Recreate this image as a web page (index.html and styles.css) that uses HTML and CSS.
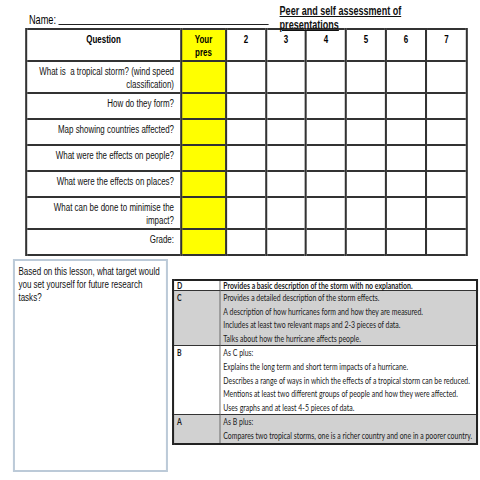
FILE: index.html
```html
<!DOCTYPE html>
<html>
<head>
<meta charset="utf-8">
<link rel="stylesheet" href="styles.css">
</head>
<body>
<div class="viewport">
<div class="page">
  <header class="top">
    <div class="name">Name:<span class="name-line"></span></div>
    <h1 class="title">Peer and self assessment of<br>presentations</h1>
  </header>
  <table class="grid">
    <colgroup>
      <col class="c-q"><col class="c-y"><col class="c-n"><col class="c-n"><col class="c-n"><col class="c-n"><col class="c-n"><col class="c-l">
    </colgroup>
    <tr class="h32"><th>Question</th><th class="yours">Your<br>pres</th><th>2</th><th>3</th><th>4</th><th>5</th><th>6</th><th>7</th></tr>
    <tr class="h32"><td class="q">What is&nbsp; a tropical storm? (wind speed<br>classification)</td><td class="yours"></td><td></td><td></td><td></td><td></td><td></td><td></td></tr>
    <tr class="h26"><td class="q">How do they form?</td><td class="yours"></td><td></td><td></td><td></td><td></td><td></td><td></td></tr>
    <tr class="h26"><td class="q">Map showing countries affected?</td><td class="yours"></td><td></td><td></td><td></td><td></td><td></td><td></td></tr>
    <tr class="h26"><td class="q">What were the effects on people?</td><td class="yours"></td><td></td><td></td><td></td><td></td><td></td><td></td></tr>
    <tr class="h26"><td class="q">What were the effects on places?</td><td class="yours"></td><td></td><td></td><td></td><td></td><td></td><td></td></tr>
    <tr class="h32"><td class="q">What can be done to minimise the<br>impact?</td><td class="yours"></td><td></td><td></td><td></td><td></td><td></td><td></td></tr>
    <tr class="h26"><td class="q">Grade:</td><td class="yours"></td><td></td><td></td><td></td><td></td><td></td><td></td></tr>
  </table>
  <div class="lower">
    <div class="target-box">Based on this lesson, what target would<br>you set yourself for future research<br>tasks?</div>
    <table class="rubric">
      <colgroup><col class="r-g"><col class="r-t"></colgroup>
      <tr class="rb-head"><td class="g">D</td><td>Provides a basic description of the storm with no explanation.</td></tr>
      <tr class="shaded"><td class="g">C</td><td>Provides a detailed description of the storm effects.<br>A description of how hurricanes form and how they are measured.<br>Includes at least two relevant maps and 2-3 pieces of data.<br>Talks about how the hurricane affects people.</td></tr>
      <tr><td class="g">B</td><td>As C plus:<br>Explains the long term and short term impacts of a hurricane.<br>Describes a range of ways in which the effects of a tropical storm can be reduced.<br>Mentions at least two different groups of people and how they were affected.<br>Uses graphs and at least 4-5 pieces of data.</td></tr>
      <tr class="shaded"><td class="g">A</td><td>As B plus:<br>Compares two tropical storms, one is a richer country and one in a poorer country.</td></tr>
    </table>
  </div>
</div>
</div>
</body>
</html>
```
FILE: styles.css
```css
* { box-sizing: border-box; }
html, body { margin: 0; background: #fff; overflow: hidden; }
body {
  color: #000;
  font-family: "Liberation Sans", Arial, sans-serif;
}
.viewport { width: 480px; height: 480px; overflow: hidden; }
/* the source sheet is horizontally squeezed; lay out at full width and squeeze it */
.page {
  width: 706px;
  height: 480px;
  transform: scaleX(0.68);
  transform-origin: 0 0;
}

.top {
  display: flex;
  align-items: flex-start;
  height: 28px;
  padding-left: 42.6px;
}
.name {
  display: flex;
  align-items: flex-start;
  padding-top: 13px;
  font-size: 13.5px;
  line-height: 14px;
}
.name-line {
  display: block;
  width: 308.8px;
  height: 12px;
  margin-left: 4px;
  border-bottom: 1px solid #222;
}
.title {
  position: relative;
  z-index: 1;
  margin: 0 0 0 16px;
  padding-top: 4px;
  font-size: 13.3px;
  line-height: 13.5px;
  font-weight: bold;
  text-decoration: underline;
  white-space: nowrap;
  color: #111;
}

.grid {
  margin-left: 36.8px;
  width: 648.5px;
  border-collapse: collapse;
  table-layout: fixed;
}
.c-q { width: 227.9px; }
.c-y { width: 66.2px; }
.c-n { width: 58.8px; }
.c-l { width: 60.3px; }
.h32 { height: 32px; }
.h26 { height: 26px; }
.grid th, .grid td {
  border-style: solid;
  border-color: #333;
  border-width: 2px 3px;
  padding: 0;
  vertical-align: top;
}
.grid th {
  padding-top: 2px;
  font-size: 11.7px;
  line-height: 13px;
  font-weight: bold;
  text-align: center;
}
.grid td.q {
  padding: 2px 8.8px 0 4px;
  text-align: right;
  font-size: 11.7px;
  line-height: 13px;
  color: #111;
  white-space: nowrap;
}
.yours { background: #ffff00; }

.lower {
  display: flex;
  align-items: flex-start;
  margin-top: 3px;
}
.target-box {
  margin-left: 19.1px;
  width: 227.9px;
  height: 213px;
  border-style: solid;
  border-color: #bccad8;
  border-width: 2px 3px;
  padding: 4px 5px;
  font-size: 11.8px;
  line-height: 13px;
  color: #111;
  white-space: nowrap;
}
.rubric {
  margin: 20px 0 0 5.9px;
  width: 450px;
  border-collapse: collapse;
  table-layout: fixed;
  border-style: solid;
  border-color: #222;
  border-width: 2px 3px;
  font-family: Lato, "Liberation Sans", sans-serif;
  font-size: 10.2px;
  line-height: 13.6px;
  color: #1a1a1a;
}
.r-g { width: 69.1px; }
.rubric td {
  border-style: solid;
  border-color: #333;
  border-width: 1px 1.5px;
  padding: 0 0 0 4.4px;
  vertical-align: top;
  white-space: nowrap;
}
.rubric td.g { font-weight: bold; }
.rb-head td {
  font-weight: bold;
  line-height: 9px;
  height: 10px;
}
.shaded td { background: #d1d1d1; }
```
